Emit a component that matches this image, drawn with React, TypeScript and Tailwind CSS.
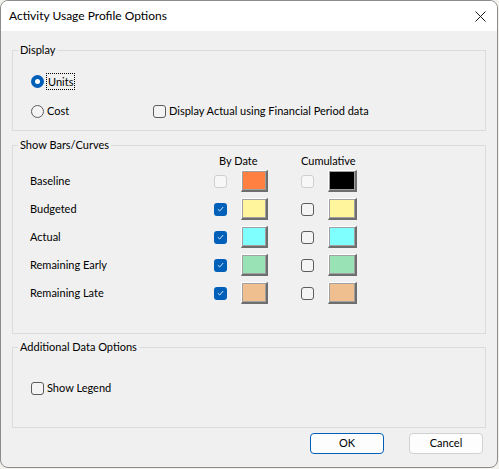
import { ReactNode } from "react"

const font = { fontFamily: 'Lato, "Noto Sans", sans-serif' }

type Row = { label: string; byDate: boolean; cumulative: boolean; dateColor: string; cumColor: string; disabled?: boolean }

const rows: Row[] = [
  { label: "Baseline", byDate: false, cumulative: false, dateColor: "bg-[#ff8040]", cumColor: "bg-black", disabled: true },
  { label: "Budgeted", byDate: true, cumulative: false, dateColor: "bg-[#fff59d]", cumColor: "bg-[#fff59d]" },
  { label: "Actual", byDate: true, cumulative: false, dateColor: "bg-[#80ffff]", cumColor: "bg-[#80ffff]" },
  { label: "Remaining Early", byDate: true, cumulative: false, dateColor: "bg-[#98e2b6]", cumColor: "bg-[#98e2b6]" },
  { label: "Remaining Late", byDate: true, cumulative: false, dateColor: "bg-[#f0bf90]", cumColor: "bg-[#f0bf90]" },
]

const Group = ({ title, className, children }: { title: string; className: string; children: ReactNode }) => (
  <div className={`relative border border-[#dcdcdc] ${className}`}>
    <span className="absolute -top-[9px] left-[5px] bg-[#f0f0f0] px-[2px] leading-[16px]">{title}</span>
    {children}
  </div>
)

const CheckBox = ({ checked, disabled }: { checked?: boolean; disabled?: boolean }) => {
  if (checked)
    return (
      <span className="flex h-[13px] w-[13px] shrink-0 items-center justify-center rounded-[3px] bg-[#005fb8]">
        <svg width="7" height="6" viewBox="0 0 7 6" fill="none">
          <path d="M0.8 3.2 L2.7 5 L6.2 1" stroke="#dfe9f5" strokeWidth="1" />
        </svg>
      </span>
    )
  return (
    <span
      className={`block h-[13px] w-[13px] shrink-0 rounded-[3px] border ${
        disabled ? "border-[#cfcfcf] bg-[#f7f7f7]" : "border-[#5c5c5c] bg-[#f4f4f4]"
      }`}
    />
  )
}

const Radio = ({ selected }: { selected?: boolean }) =>
  selected ? (
    <span className="flex h-[13px] w-[13px] shrink-0 items-center justify-center rounded-full bg-[#005fb8]">
      <span className="h-[5px] w-[5px] rounded-full bg-white" />
    </span>
  ) : (
    <span className="block h-[13px] w-[13px] shrink-0 rounded-full border border-[#5c5c5c] bg-[#f4f4f4]" />
  )

const Swatch = ({ color, width }: { color: string; width: string }) => (
  <span className={`block h-[22px] ${width} shrink-0 border-t border-l border-t-white border-l-white border-r-2 border-b-2 border-r-[#6e6e6e] border-b-[#6e6e6e]`}>
    <span className={`block h-full w-full border border-[#a0a0a0] ${color}`} />
  </span>
)

export default function App() {
  return (
    <div className="h-[469px] w-[499px] bg-[#f3f1ec] text-[11px] text-black" style={font}>
      <div className="flex h-[468px] w-[498px] flex-col overflow-hidden rounded-[8px] border border-[#8c8c8c] bg-[#f0f0f0]">
        <div className="flex h-[30px] shrink-0 items-center justify-between bg-white pl-[8px] pr-[8px]">
          <span className="text-[12px]">Activity Usage Profile Options</span>
          <svg width="11" height="11" viewBox="0 0 11 11" className="mr-[3px]">
            <path d="M0.5 0.5 L10.5 10.5 M10.5 0.5 L0.5 10.5" stroke="#1a1a1a" strokeWidth="1" />
          </svg>
        </div>

        <div className="flex flex-col px-[11px] pt-[19px]">
          <Group title="Display" className="h-[81px]">
            <div className="flex flex-col pl-[18px] pt-[23px]">
              <div className="flex h-[14px] items-center gap-[2px]">
                <Radio selected />
                <span className="border border-dotted border-black px-[1px] leading-[15px]">Units</span>
              </div>
              <div className="mt-[16px] flex h-[14px] items-center">
                <Radio />
                <span className="ml-[3px] w-[106px]">Cost</span>
                <CheckBox />
                <span className="ml-[3px]">Display Actual using Financial Period data</span>
              </div>
            </div>
          </Group>

          <Group title="Show Bars/Curves" className="mt-[14px] h-[189px]">
            <div className="flex flex-col gap-[6px] pl-[17px] pt-[6px]">
              <div className="-mb-[6px] flex h-[18px] items-center">
                <span className="ml-[189px] w-[82px]">By Date</span>
                <span>Cumulative</span>
              </div>
              {rows.map((row) => (
                <div key={row.label} className="flex h-[22px] items-center">
                  <span className="w-[184px]">{row.label}</span>
                  <CheckBox checked={row.byDate} disabled={row.disabled} />
                  <span className="ml-[14px]">
                    <Swatch color={row.dateColor} width="w-[27px]" />
                  </span>
                  <span className="ml-[33px]">
                    <CheckBox checked={row.cumulative} disabled={row.disabled} />
                  </span>
                  <span className="ml-[14px]">
                    <Swatch color={row.cumColor} width="w-[29px]" />
                  </span>
                </div>
              ))}
            </div>
          </Group>

          <Group title="Additional Data Options" className="mt-[13px] h-[81px]">
            <div className="flex items-center pl-[18px] pt-[32px]">
              <CheckBox />
              <span className="ml-[3px]">Show Legend</span>
            </div>
          </Group>

          <div className="mt-[5px] flex justify-end gap-[25px] pr-[3px]">
            <button className="h-[21px] w-[74px] rounded-[4px] border border-[#005fb8] bg-[#fdfdfd] text-[11px]">OK</button>
            <button className="h-[21px] w-[74px] rounded-[4px] border border-[#d0d0d0] bg-[#fdfdfd] text-[11px]">Cancel</button>
          </div>
        </div>
      </div>
    </div>
  )
}
